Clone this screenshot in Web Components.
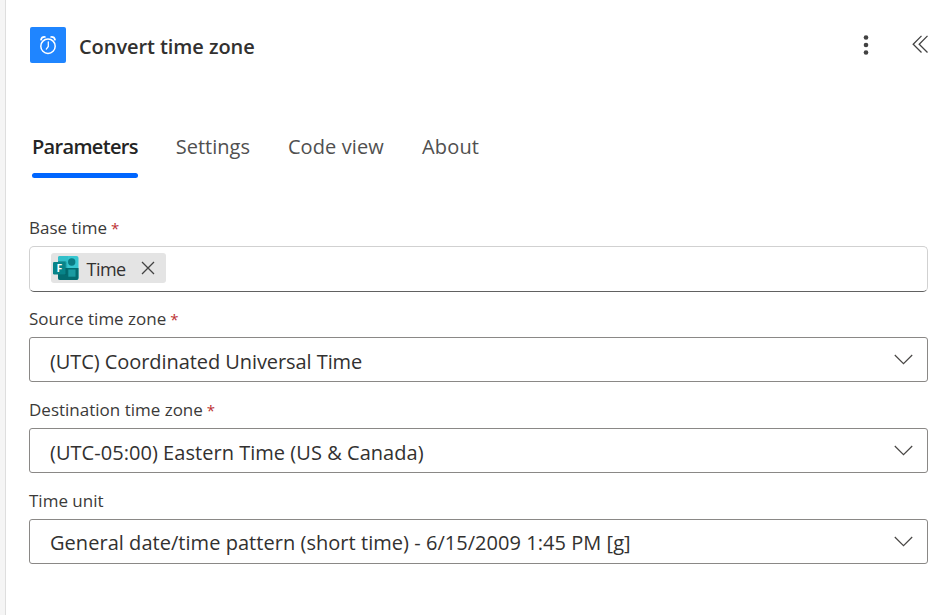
<!DOCTYPE html>
<html lang="en">
<head>
  <meta charset="UTF-8">
  <title>Convert time zone</title>
<style>
body {
  margin: 0;
  background: #f5f5f5;
  font-family: "Open Sans", "Noto Sans", sans-serif;
  color: #323130;
}
</style>
</head>
<body>
<side-panel>
  <panel-header slot="header">Convert time zone</panel-header>
  <tab-list slot="tabs">
    <tab-item selected style="--spacing: -0.68px">Parameters</tab-item>
    <tab-item>Settings</tab-item>
    <tab-item style="--spacing: 0.1px">Code view</tab-item>
    <tab-item style="--spacing: 0.2px">About</tab-item>
  </tab-list>
  <form-field label="Base time" required>
    <token-input><token-chip>Time</token-chip></token-input>
  </form-field>
  <form-field label="Source time zone" required>
    <drop-down style="--spacing: -0.07px">(UTC) Coordinated Universal Time</drop-down>
  </form-field>
  <form-field label="Destination time zone" required>
    <drop-down>(UTC-05:00) Eastern Time (US &amp; Canada)</drop-down>
  </form-field>
  <form-field label="Time unit">
    <drop-down style="--nudge: 2px">General date/time pattern (short time) - 6/15/2009 1:45 PM [g]</drop-down>
  </form-field>
</side-panel>

<script>
class BaseElement extends HTMLElement {
  constructor() {
    super();
    this.attachShadow({ mode: "open" });
    this.shadowRoot.innerHTML = this.render();
  }
}

customElements.define("side-panel", class extends BaseElement {
  render() {
    return `
<style>
  :host {
    display: flex;
    flex-direction: column;
    box-sizing: border-box;
    height: 615px;
    margin-left: 5px;
    padding: 27px 15px 0 23px;
    border-left: 1px solid #dedede;
    background: #fff;
    overflow: hidden;
  }
  .fields {
    display: flex;
    flex-direction: column;
    margin-top: 36px;
  }
</style>
<slot name="header"></slot>
<slot name="tabs"></slot>
<div class="fields"><slot></slot></div>`;
  }
});

customElements.define("panel-header", class extends BaseElement {
  render() {
    return `
<style>
  :host {
    display: flex;
    align-items: center;
    height: 36px;
    padding-left: 1px;
  }
  .icon {
    width: 36px;
    height: 36px;
    border-radius: 2px;
    background: #1f85ff;
  }
  .title {
    flex: 1;
    margin-left: 13px;
    padding-top: 4px;
    font-size: 20px;
    font-weight: 600;
    line-height: 28px;
    letter-spacing: -0.07px;
  }
  .more { margin-right: 42px; }
  svg { display: block; }
</style>
<svg class="icon" viewBox="0 0 36 36" fill="none" stroke="#fff" stroke-linecap="round" aria-hidden="true">
  <circle cx="18" cy="19.2" r="7.2" stroke-width="1.5"></circle>
  <path d="M18.3 14.8v4.7l-2 2.600" stroke-width="1.3"></path>
  <path d="M11 12.700c.4-1.700 2-2.900 4-2.700M25 12.700c-.4-1.700-2-2.900-4-2.700" stroke-width="1.7"></path>
</svg>
<div class="title"><slot></slot></div>
<svg class="more" width="6" height="22" viewBox="0 0 6 22" fill="#424242" aria-hidden="true">
  <circle cx="3" cy="3.5" r="2.3"></circle>
  <circle cx="3" cy="11" r="2.3"></circle>
  <circle cx="3" cy="18.5" r="2.3"></circle>
</svg>
<svg width="17" height="20" viewBox="0 0 17 20" fill="none" stroke="#424242" stroke-width="1.3" aria-hidden="true">
  <path d="m10.500.9-8.300 8.300 8.300 8.300M16.500.9 8.200 9.200l8.300 8.300"></path>
</svg>`;
  }
});

customElements.define("tab-list", class extends BaseElement {
  render() {
    return `
<style>
  :host {
    display: flex;
    gap: 38px;
    margin: 69px 0 0 3px;
  }
</style>
<slot></slot>`;
  }
});

customElements.define("tab-item", class extends BaseElement {
  render() {
    return `
<style>
  :host {
    display: block;
    box-sizing: border-box;
    height: 46px;
    font-size: 20px;
    line-height: 30px;
    white-space: nowrap;
    letter-spacing: var(--spacing, 0);
    color: #505050;
  }
  :host([selected]) {
    font-weight: 600;
    color: #242424;
  }
  :host([selected])::after {
    content: "";
    display: block;
    height: 5px;
    margin-top: 11px;
    border-radius: 3px;
    background: #0066ff;
  }
</style>
<slot></slot>`;
  }
});

customElements.define("form-field", class extends BaseElement {
  render() {
    return `
<style>
  :host {
    display: block;
    height: 91px;
  }
  label {
    display: block;
    height: 32px;
    font-size: 17px;
    line-height: 27px;
    letter-spacing: 0;
    color: #3b3a39;
  }
  .star {
    display: none;
    font-size: 15px;
    color: #bc2f32;
  }
  :host([required]) .star { display: inline; }
</style>
<label><span class="text"></span><span class="star"> *</span></label>
<slot></slot>`;
  }

  connectedCallback() {
    this.shadowRoot.querySelector(".text").textContent = this.getAttribute("label");
  }
});

customElements.define("token-input", class extends BaseElement {
  render() {
    return `
<style>
  :host {
    display: flex;
    align-items: flex-start;
    box-sizing: border-box;
    height: 46px;
    padding: 6px 21px;
    border: 1px solid #d1d1d1;
    border-bottom-color: #616161;
    border-radius: 5px;
  }
</style>
<slot></slot>`;
  }
});

customElements.define("token-chip", class extends BaseElement {
  render() {
    return `
<style>
  :host {
    display: flex;
    align-items: center;
    box-sizing: border-box;
    width: 115px;
    height: 30px;
    padding-left: 2px;
    border-radius: 3px;
    background: #e4e4e4;
  }
  .name {
    flex: 1;
    margin-left: 7.5px;
    padding-top: 1px;
    font-size: 18px;
    line-height: 30px;
    letter-spacing: -0.5px;
  }
  .close { margin-right: 11px; }
</style>
<svg width="26" height="26" viewBox="0 0 26 26" aria-hidden="true">
  <rect x="5" y="1" width="20.5" height="24" rx="2" fill="#37c6d0"></rect>
  <path d="M5 13h10v12H7a2 2 0 0 1-2-2Z" fill="#026c70"></path>
  <path d="M15 13h10.500v10a2 2 0 0 1-2 2H15Z" fill="#036c70"></path>
  <path d="M5 3a2 2 0 0 1 2-2h8v12H5Z" fill="#31bfc9"></path>
  <circle cx="18.7" cy="7" r="3.700" fill="#0b7b83"></circle>
  <rect x="15.300" y="14.500" width="7.200" height="7.200" fill="#1a9ba1"></rect>
  <path d="M5 6h7a1.500 1.500 0 0 1 1.500 1.500V20H5Z" fill="#055c60" opacity=".4"></path>
  <rect y="7" width="12.500" height="12.500" rx="1.200" fill="#078489"></rect>
  <text x="6.400" y="17" text-anchor="middle" font-size="10.500" font-weight="700" fill="#fff">F</text>
</svg>
<span class="name"><slot></slot></span>
<svg class="close" width="14" height="14" viewBox="0 0 14 14" fill="none" stroke="#424242" stroke-width="1.3" aria-hidden="true">
  <path d="m1 1 12 12M13 1 1 13"></path>
</svg>`;
  }
});

customElements.define("drop-down", class extends BaseElement {
  render() {
    return `
<style>
  :host {
    display: flex;
    align-items: center;
    justify-content: space-between;
    box-sizing: border-box;
    height: 45px;
    padding: 0 14px 0 20px;
    border: 1px solid #8a8886;
    border-radius: 3px;
    font-size: 20px;
    line-height: 28px;
    letter-spacing: var(--spacing, 0.04px);
    white-space: nowrap;
  }
  .value { padding-top: var(--nudge, 4px); }
</style>
<span class="value"><slot></slot></span>
<svg width="19" height="11" viewBox="0 0 19 11" fill="none" stroke="#484644" stroke-width="1.2" aria-hidden="true">
  <path d="m.8 1 8.700 8.700L18.200 1"></path>
</svg>`;
  }
});
</script>
</body>
</html>
